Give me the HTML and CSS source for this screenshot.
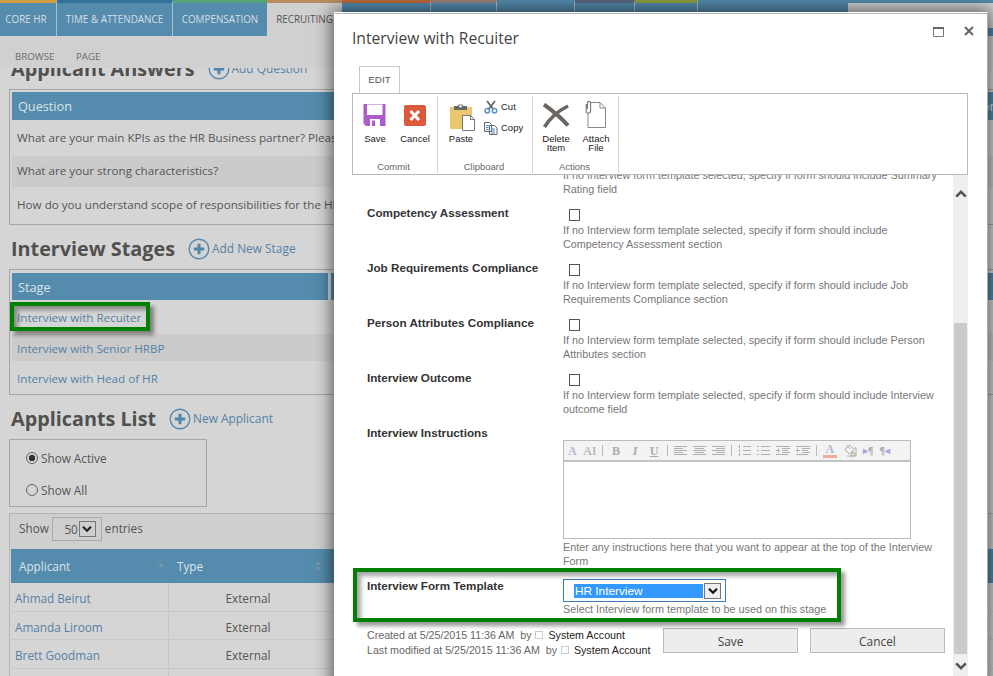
FILE: index.html
```
<!DOCTYPE html>
<html>
	<head>
		<meta charset="utf-8">
		<title>Recruiting</title>
		<link rel="stylesheet" href="styles.css">
	</head>
	<body>
		<svg width="0" height="0" class="defs">
			<symbol id="plus" viewBox="0 0 22 22"><circle cx="11" cy="11" r="9.8" fill="none" stroke="#5b89ae" stroke-width="1.4"/><path d="M11 5.8v10.4M5.8 11h10.4" stroke="#4f84ad" stroke-width="3"/></symbol>
			<symbol id="chevron" viewBox="0 0 10 8"><path d="M1 1.8l4 4 4-4" fill="none" stroke="currentColor" stroke-width="2.2"/></symbol>
		</svg>
		<div id="page">
			<div class="topnav">
				<div class="tab core">CORE HR</div>
				<div class="tab time">TIME &amp; ATTENDANCE</div>
				<div class="tab comp">COMPENSATION</div>
				<div class="tab recruiting">RECRUITING</div>
				<div class="tab t5"></div>
				<div class="tab t6"></div>
				<div class="tab t7"></div>
				<div class="tab t8"></div>
				<div class="tab t9"></div>
				<div class="tab t10"></div>
				<div class="search"></div>
			</div>
			<div class="subnav"><span class="browse">BROWSE</span><span>PAGE</span></div>
			<div class="content">
				<div class="heading answers"><h2>Applicant Answers</h2><svg class="plus"><use href="#plus"/></svg><a>Add Question</a></div>
				<div class="grid questions">
					<div class="head"><span>Question</span><span class="last">Action</span></div>
					<div class="row q1">What are your main KPIs as the HR Business partner? Please</div>
					<div class="row q2 alt">What are your strong characteristics?</div>
					<div class="row q3">How do you understand scope of responsibilities for the HR</div>
				</div>
				<div class="heading stages"><h2>Interview Stages</h2><svg class="plus"><use href="#plus"/></svg><a>Add New Stage</a></div>
				<div class="grid stagelist">
					<div class="head"><span class="stage">Stage</span><span class="rest"></span></div>
					<div class="row s1"><a>Interview with Recuiter</a></div>
					<div class="row s2 alt"><a>Interview with Senior HRBP</a></div>
					<div class="row s3"><a>Interview with Head of HR</a></div>
				</div>
				<div class="heading list"><h2>Applicants List</h2><svg class="plus"><use href="#plus"/></svg><a>New Applicant</a></div>
				<div class="filter">
					<div><i class="radio on"></i><span>Show Active</span></div>
					<div><i class="radio"></i><span>Show All</span></div>
				</div>
				<div class="applicants">
					<div class="length">Show <span class="count">50<i class="drop"><svg><use href="#chevron"/></svg></i></span> entries</div>
					<div class="cols">
						<span class="name">Applicant<svg width="6" height="10"><path d="M0 6l3-4 3 4z" fill="#7a94a6"/></svg></span>
						<span class="type">Type<svg width="7" height="10"><path d="M.5 4l3-3.500 3 3.500zM.5 6l3 3.500 3-3.500z" fill="#7a94a6"/></svg></span>
					</div>
					<div class="person"><a>Ahmad Beirut</a><span>External</span></div>
					<div class="person"><a>Amanda Liroom</a><span>External</span></div>
					<div class="person"><a>Brett Goodman</a><span>External</span></div>
					<div class="person"><a></a><span></span></div>
				</div>
			</div>
		</div>

		<div id="dialog">
			<div class="title">
				<h1>Interview with Recuiter</h1>
				<svg class="max" width="11" height="10"><path d="M.5 .5h10v9H.5z" fill="none" stroke="#777"/><path d="M0 0h11v2H0z" fill="#666"/></svg>
				<svg class="close" width="10" height="10"><path d="M1 1l8 8M9 1L1 9" stroke="#666" stroke-width="2"/></svg>
			</div>
			<div class="edit">EDIT</div>
			<div class="ribbon">
				<div class="group commit">
					<div class="tools">
						<div class="tool"><svg width="24" height="24"><path d="M.5 1h22v22H3l-2.500-2.500z" fill="#ae5cc9"/><path d="M4 1.500h15.500v10.500H4zM7 16h10v7H7z" fill="#fff"/><path d="M9 17.500h3v5.500H9z" fill="#ae5cc9"/></svg>Save</div>
						<div class="tool cancel"><svg width="24" height="24"><rect x="1" y="2" width="22" height="21" rx="2" fill="#dc5a3c"/><path d="M7.500 8l8.500 9M16 8l-8.500 9" stroke="#fff" stroke-width="3"/></svg>Cancel</div>
					</div>
					<div class="name">Commit</div>
				</div>
				<div class="group clipboard">
					<div class="tools">
						<div class="tool"><svg width="27" height="28"><path d="M1 4h22v22H1z" fill="#ebc76f"/><path d="M5 3h3.500a3.500 3.500 0 0 1 6 0H18v4H5z" fill="#686868"/><circle cx="11.500" cy="3.200" r="1.300" fill="#fff"/><path d="M13.500 12.500h8l4 4v11h-12z" fill="#fff" stroke="#777"/><path d="M21.500 12.500v4h4" fill="none" stroke="#777"/></svg>Paste</div>
						<div class="small">
							<div><svg width="14" height="14"><path d="M3 1l6.500 8.500M11 1L4.500 9.500" stroke="#666" stroke-width="1.800"/><circle cx="3.300" cy="10.800" r="2.200" fill="none" stroke="#5f8fc4" stroke-width="1.500"/><circle cx="10.500" cy="10.800" r="2.200" fill="none" stroke="#5f8fc4" stroke-width="1.500"/></svg>Cut</div>
							<div><svg width="14" height="14"><path d="M.5 1.500h5l2 2v7h-7zM5.500 4.500h5l2.500 2.500v6.500h-7.500z" fill="#fff" stroke="#666"/><path d="M2 4.500h3M2 6.500h2.500M2 8.500h2.500M7 8h4M7 10h4M7 12h4" stroke="#4b86b8"/></svg>Copy</div>
						</div>
					</div>
					<div class="name">Clipboard</div>
				</div>
				<div class="group actions">
					<div class="tools">
						<div class="tool"><svg width="28" height="26"><path d="M2 1.500c7 5 17 13 24 21" fill="none" stroke="#6b6561" stroke-width="4"/><path d="M26 3C18 7 8 15 2.500 24" fill="none" stroke="#6b6561" stroke-width="3.600"/></svg>Delete<br>Item</div>
						<div class="tool attach"><svg width="24" height="28"><path d="M7 2.500h9l5.500 5.500v19.500h-17.500V13" fill="#fff" stroke="#888"/><path d="M16 2.500v5.500h5.500" fill="none" stroke="#888"/><path d="M2.200 4v7a2.200 2.200 0 0 0 4.400 0V3a1.600 1.600 0 0 0-3.200 0v6" fill="none" stroke="#777" stroke-width="1.100"/></svg>Attach<br>File</div>
					</div>
					<div class="name">Actions</div>
				</div>
			</div>
			<div class="body">
				<div class="form">
					<div class="field first"><label></label><div class="value"><i class="check"></i><p>If no Interview form template selected, specify if form should include Summary<br>Rating field</p></div></div>
					<div class="field"><label>Competency Assessment</label><div class="value"><i class="check"></i><p>If no Interview form template selected, specify if form should include<br>Competency Assessment section</p></div></div>
					<div class="field"><label>Job Requirements Compliance</label><div class="value"><i class="check"></i><p>If no Interview form template selected, specify if form should include Job<br>Requirements Compliance section</p></div></div>
					<div class="field"><label>Person Attributes Compliance</label><div class="value"><i class="check"></i><p>If no Interview form template selected, specify if form should include Person<br>Attributes section</p></div></div>
					<div class="field"><label>Interview Outcome</label><div class="value"><i class="check"></i><p>If no Interview form template selected, specify if form should include Interview<br>outcome field</p></div></div>
					<div class="field instructions">
						<label>Interview Instructions</label>
						<div class="value">
							<div class="editor">
								<div class="bar">
									<b class="font">A</b><b class="size">AI</b><i class="sep"></i>
									<b class="bold">B</b><b class="italic">I</b><b class="underline">U</b><i class="sep"></i>
									<svg width="13" height="11"><path d="M0 1.500h13M0 3.500h9M0 5.500h13M0 7.500h9M0 9.500h13"/></svg>
									<svg width="13" height="11"><path d="M0 1.500h13M2 3.500h9M0 5.500h13M2 7.500h9M0 9.500h13"/></svg>
									<svg width="13" height="11"><path d="M0 1.500h13M4 3.500h9M0 5.500h13M4 7.500h9M0 9.500h13"/></svg>
									<i class="sep"></i>
									<svg width="13" height="11"><path d="M1.500 0v3M1.500 4v3M1.500 8v3M5 1.500h8M5 5.500h8M5 9.500h8"/></svg>
									<svg width="13" height="11"><path d="M0 1.500h2M0 5.500h2M0 9.500h2M4 1.500h9M4 5.500h9M4 9.500h9"/></svg>
									<svg width="14" height="11"><path d="M0 1.500h14M6 3.500h8M6 5.500h6M6 7.500h8M0 9.500h12M0 5.500h4M2.500 3.500v4"/></svg>
									<svg width="14" height="11"><path d="M0 1.500h14M6 3.500h8M6 5.500h6M6 7.500h8M0 9.500h12M0 5.500h4M1.500 3.500v4"/></svg>
									<i class="sep"></i>
									<b class="color">A</b>
									<svg width="14" height="13"><path d="M2 5l5-4 4 5-5 4zM4 1l3 4M11 4h2v8H4"/><path d="M9 8l3 1v3H8z" fill="#e6ddb4"/></svg>
									<b class="para"><i>&#9656;</i>&para;</b><b class="para">&para;<i>&#9666;</i></b>
								</div>
							</div>
							<p>Enter any instructions here that you want to appear at the top of the Interview<br>Form</p>
						</div>
					</div>
					<div class="field template">
						<label>Interview Form Template</label>
						<div class="value">
							<div class="select"><span>HR Interview</span><i class="drop"><svg><use href="#chevron"/></svg></i></div>
							<p>Select Interview form template to be used on this stage</p>
						</div>
					</div>
					<div class="footer">
						<div class="info">
							<div class="created">Created at 5/25/2015 11:36 AM&nbsp; by <i></i><em>System Account</em></div>
							<div class="modified">Last modified at 5/25/2015 11:36 AM&nbsp; by <i></i><em>System Account</em></div>
						</div>
						<button>Save</button>
						<button>Cancel</button>
					</div>
				</div>
				<div class="scroll">
					<svg class="up"><use href="#chevron"/></svg>
					<div class="thumb"></div>
					<svg><use href="#chevron"/></svg>
				</div>
			</div>
		</div>

		<div class="mark mark-stage"></div>
		<div class="mark mark-template"></div>
	</body>
</html>
```

FILE: styles.css
```
* {box-sizing:border-box;}
body {margin:0;width:993px;height:676px;overflow:hidden;position:relative;background:#d5d5d5;color:#555;font-family:"Open Sans",sans-serif;font-size:11.750px;white-space:nowrap;}
h1,h2,p {margin:0;}
i {font-style:normal;}
.defs {position:absolute;}
#page {height:676px;overflow:hidden;}
#page a {color:#5581a6;}

.topnav {display:flex;height:36px;background:#558bad;}
.tab {border-top:3px solid #558bad;border-right:1px solid #a9bfce;color:#d6dfe6;font-size:9.900px;line-height:33px;text-align:center;flex:none;}
.core {width:57px;border-top-color:#d39b3f;padding-right:4px;}
.time {width:116px;border-top-color:#32729a;}
.comp {width:94px;border-top-color:#56a576;border-right:0;}
.recruiting {width:75px;border-top-color:#b98d60;border-right:0;background:#d0d0d0;color:#555;}
.t5 {width:89px;border-top-color:#b9683a;}
.t6 {width:66px;border-top-color:#9a7f76;}
.t7 {width:78px;}
.t8 {width:60px;border-top-color:#57687e;}
.t9 {width:63px;border-top-color:#8ca03f;}
.t10 {width:150px;border-right:0;}
.search {flex:1;height:25px;margin-top:3px;background:#d0d0d0;}
.subnav {height:32px;background:#d0d0d0;padding:13px 0 0 15px;font-size:9.700px;line-height:15px;color:#6b6b6b;}
.browse {display:inline-block;width:61px;}

.content {height:608px;overflow:hidden;}
.heading {display:flex;align-items:center;padding-left:11px;}
.heading h2 {font-size:19.800px;line-height:28px;color:#505050;}
.heading a {font-size:11.900px;margin-top:-2px;}
.plus {width:22px;height:22px;margin:0 2px 0 13px;}
.answers {height:28px;margin-top:-13px;margin-bottom:6px;}
.answers .plus {margin-top:-1px;}
.answers a {margin-top:-3px;}
.stages {height:44px;padding-top:3px;}
.list {height:44px;padding-top:4px;}
.list .plus {margin-top:-1px;}
.grid {border:1px solid #a6a6a6;margin-left:9px;width:1020px;padding:3px 0 0 2px;}
.head {display:flex;background:#558bad;color:#dce4ea;font-size:12.700px;height:28px;line-height:29px;padding-left:6px;}
.head .last {margin-left:888px;}
.row {padding-left:5px;font-size:11.650px;}
.alt {background:#cbcbcb;}
.questions {height:136px;padding-top:2px;}
.q1 {height:36px;line-height:36px;}
.q2 {height:31px;line-height:30px;}
.q3 {height:36px;line-height:36px;}
.stagelist {height:126px;}
.stagelist .head {background:none;padding:0;height:27px;line-height:29px;}
.stage {width:316px;background:#558bad;padding-left:6px;margin-right:3px;}
.rest {flex:1;background:#558bad;}
.s1 {height:34px;line-height:36px;}
.s2 {height:27px;line-height:29px;}
.s3 {height:32px;line-height:35px;}
.filter {border:1px solid #a6a6a6;margin-left:9px;width:198px;height:68px;padding:2px 0 0 16px;}
.filter div {display:flex;align-items:center;height:32px;gap:3px;}
.radio {width:12px;height:12px;border:1px solid #666;border-radius:50%;}
.on {background:radial-gradient(#333 0 3px,transparent 3.500px);}
.applicants {margin:6px 0 0 9px;width:1020px;border:1px solid #b5b5b5;border-width:1px 0 0 1px;padding-left:1px;}
.length {display:flex;height:35px;margin-left:-1px;padding:3px 0 0 9px;background:#cfcfcf;line-height:22px;gap:3px;}
.count {display:flex;align-items:center;justify-content:flex-end;width:50px;height:24px;border:1px solid #aaa;padding:0 5px 0 0;}
.drop {display:flex;align-items:center;justify-content:center;width:17px;height:16px;border:1px solid #777;color:#222;}
.drop svg {width:10px;height:8px;}
.length .drop {margin-left:1px;}
.cols {display:flex;height:34px;line-height:34px;background:#558bad;color:#dce4ea;}
.cols span {display:flex;align-items:center;justify-content:space-between;padding-right:5px;}
.cols .name {width:158px;padding-left:8px;}
.cols .type {width:158px;padding-left:8px;}
.person {display:flex;height:28.500px;line-height:30px;border-bottom:1px solid #c7c7c7;}
.person a {width:158px;padding-left:4px;border-right:1px solid #c7c7c7;}
.person span {width:158px;text-align:center;}

/* dialog */
#dialog {position:absolute;left:334px;top:12px;width:654px;height:680px;background:#fff;border:1px solid #fff;border-right-color:#aaa;box-shadow:0 0 16px 2px rgba(0,0,0,.6);font-family:"Liberation Sans",Arial,sans-serif;}
.title {display:flex;height:53px;padding-left:16px;border-top:1px solid #b5b5b5;}
.title h1 {font:15.650px/25px "Open Sans",sans-serif;color:#444;width:582px;padding-left:1px;margin-top:12px;}
.max {margin:13px 20px 0 0;}
.close {margin-top:12px;}
.edit {width:41px;height:27px;margin-left:24px;border:1px solid #c9c9c9;border-bottom:0;font-size:9.800px;line-height:26px;text-align:center;color:#555;}
.ribbon {display:flex;width:616px;height:82px;margin-left:17px;border:1px solid #b9b9b9;position:relative;background:#fff;}
.group {height:77px;margin-top:2px;border-right:1px solid #d5d5d5;display:flex;flex-direction:column;justify-content:space-between;}
.group .name {text-align:center;font-size:9.500px;line-height:13px;color:#666;padding-right:5px;}
.tools {display:flex;font-size:9.500px;line-height:9px;color:#222;}
.tool {display:flex;flex-direction:column;align-items:center;text-align:center;width:40px;}
.tool svg {margin:7px 0 7px;}
.commit {width:85px;padding-left:2px;}
.clipboard {width:95px;padding-left:3px;}
.clipboard .tool svg {margin:7px 0 3px 3px;}
.actions {width:86px;padding-left:3px;}
.actions .tool svg {margin:7px 0 5px;}
.actions .attach svg {margin:4px 0 6px;}
.small {margin-left:3px;}
.small div {display:flex;align-items:center;height:21px;gap:3px;}

.body {display:flex;height:501px;margin-left:32px;}
.form {width:586px;height:501px;overflow:hidden;}
.field {display:flex;height:55px;}
.field label {width:196px;flex:none;font-weight:bold;font-size:11.680px;line-height:14px;color:#333;padding-top:4px;}
.field.first {margin-top:-28px;}
.field p {font-size:10.820px;line-height:13.500px;color:#777;}
.check {display:block;width:11px;height:12px;border:1px solid #555;margin:7px 0 3px 6px;}
.instructions {height:153px;}
.editor {width:348px;height:99px;border:1px solid #bbb;margin:18px 0 2px;}
.bar {display:flex;align-items:center;justify-content:space-between;height:21px;padding:0 20px 0 4px;background:#f3f3f3;border-bottom:2px solid #c3c3c3;color:#aaa;}
.bar b {font:bold 12px/14px "Liberation Serif",serif;}
.bar svg {fill:none;stroke:#b0b0b0;}
.bar .sep {width:1px;height:11px;background:#bbb;}
.bar .font {color:#b9b9d6;}
.bar .size {font-weight:normal;font-size:13px;}
.bar .bold, .bar .italic, .bar .underline {width:13px;text-align:center;}
.bar .italic {font-style:italic;}
.bar .underline {text-decoration:underline;}
.bar .color {color:#b4b4d0;border-bottom:3px solid #f0ac9e;line-height:11px;width:14px;text-align:center;}
.bar .para {font-size:10px;}
.bar .para i {color:#a9a9da;}
.template {height:47px;}
.select {display:flex;align-items:center;width:163px;height:23px;margin:4px 0 1px;padding:0 4px 0 10px;border:1px solid #3b7db5;}
.select span {flex:1;height:14px;background:#3399ff;color:#fff;font-size:11.800px;line-height:14px;padding-left:1px;margin-right:1px;}
.select .drop {background:#eee;color:#111;}
.footer {display:flex;padding-top:6px;}
.info {width:296px;flex:none;font-size:10.670px;line-height:15px;color:#666;}
.info i {display:inline-block;width:8px;height:8px;border:1px solid #ccc;margin:0 5px 0 1px;}
.info em {font-style:normal;color:#222;}
button {width:135px;height:25px;padding:0 0 0 0;margin-right:12px;flex:none;background:#ededed;border:1px solid #bcbcbc;color:#444;font:11.900px "Open Sans",sans-serif;}
.scroll {display:flex;flex-direction:column;align-items:center;width:15px;height:501px;background:#efefef;color:#555;}
.scroll svg {width:12px;height:10px;margin-top:7px;}
.scroll .up {transform:scaleY(-1);margin:14px 0 124px;}
.thumb {width:13px;height:331px;background:#cbcbcb;}

/* highlight boxes */
.mark {position:absolute;border:4px solid #008000;box-shadow:4px 4px 4px rgba(0,0,0,.4),inset 4px 4px 4px rgba(0,0,0,.35);}
.mark-stage {left:10px;top:302px;width:140px;height:29px;}
.mark-template {left:353px;top:568px;width:488px;height:54px;}
```
